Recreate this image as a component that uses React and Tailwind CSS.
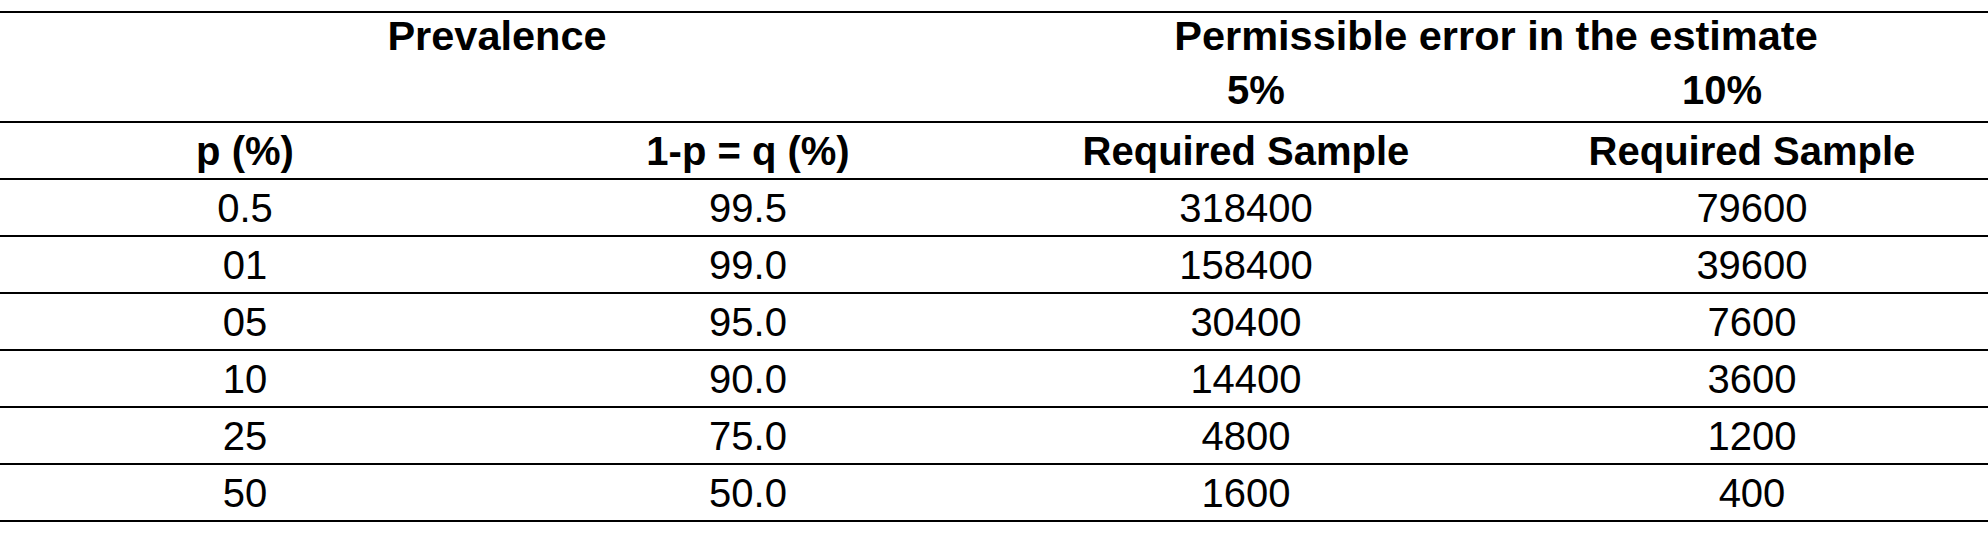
export default function App() {
  const rows = [
    ["0.5", "99.5", "318400", "79600"],
    ["01", "99.0", "158400", "39600"],
    ["05", "95.0", "30400", "7600"],
    ["10", "90.0", "14400", "3600"],
    ["25", "75.0", "4800", "1200"],
    ["50", "50.0", "1600", "400"],
  ];
  const grid = "grid grid-cols-[490px_516px_480px_1fr]";
  return (
    <div className="w-[1988px] h-[534px] bg-white pt-[11px] overflow-hidden text-black font-['Liberation_Sans',Arial,sans-serif] text-[40px] leading-[46px]">
      <div className="border-t-2 border-black">
        <div className="h-[110px] border-b-2 border-black font-bold">
          <div className="grid grid-cols-[994px_1fr] h-[54px] text-[41.5px]">
            <div className="text-center">Prevalence</div>
            <div className="text-center pl-[10px]">Permissible error in the estimate</div>
          </div>
          <div className="grid grid-cols-[1036px_440px_1fr] h-[46px]">
            <div></div>
            <div className="text-center">5%</div>
            <div className="text-center pr-[20px]">10%</div>
          </div>
        </div>
        <div className={`${grid} h-[57px] items-center border-b-2 border-black font-bold`}>
          <div className="text-center">p (%)</div>
          <div className="text-center">1-p = q (%)</div>
          <div className="text-center">Required Sample</div>
          <div className="text-center pl-[30px]">Required Sample</div>
        </div>
        {rows.map((r, i) => (
          <div key={i} className={`${grid} h-[57px] items-center border-b-2 border-black`}>
            <div className="text-center">{r[0]}</div>
            <div className="text-center">{r[1]}</div>
            <div className="text-center">{r[2]}</div>
            <div className="text-center pl-[30px]">{r[3]}</div>
          </div>
        ))}
      </div>
    </div>
  );
}
